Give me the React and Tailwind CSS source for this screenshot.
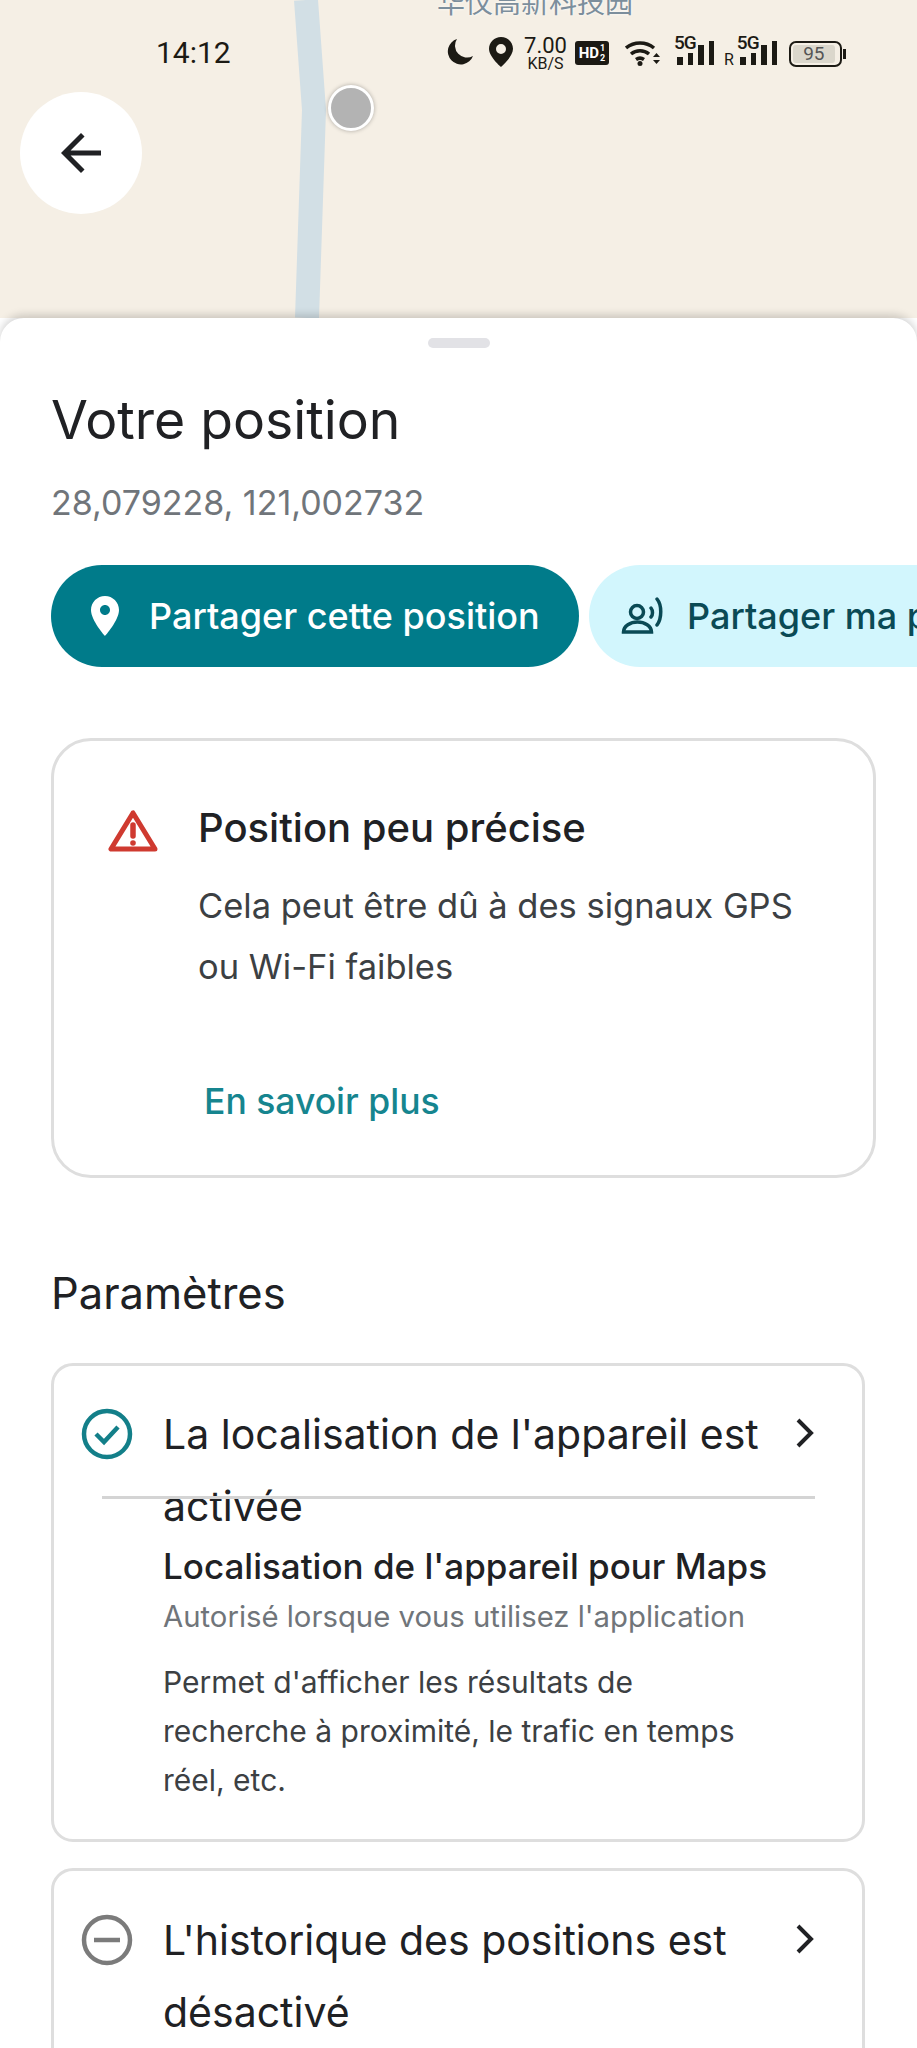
import { Fragment } from "react";

function BackArrow() {
  return (
    <svg viewBox="0 0 24 24" className="w-[60px] h-[60px] fill-[#202124]">
      <path d="M20 11H7.83l5.59-5.59L12 4l-8 8 8 8 1.41-1.41L7.83 13H20v-2z" />
    </svg>
  );
}

function Pin({ className }) {
  return (
    <svg viewBox="0 0 24 24" className={className}>
      <path d="M12 2C8.13 2 5 5.13 5 9c0 5.25 7 13 7 13s7-7.75 7-13c0-3.87-3.13-7-7-7zm0 9.5c-1.38 0-2.5-1.12-2.5-2.5s1.12-2.5 2.5-2.5 2.5 1.12 2.5 2.5-1.12 2.5-2.5 2.5z" />
    </svg>
  );
}

function SignalBars({ r }) {
  return (
    <div className="flex items-end h-[30px]">
      {r && <span className="text-[16px] leading-[14px] mr-[3px] font-['Roboto',sans-serif]">R</span>}
      <div className="relative w-[39px] h-[30px]">
        <span className="absolute left-0 top-[-3px] text-[19px] leading-[18px] font-medium tracking-[-1px] font-['Roboto',sans-serif]">5G</span>
        <div className="absolute bottom-[2px] left-[3px] flex items-end gap-[5px]">
          <i className="block w-[6px] h-[8px] bg-[#1c1a14]" />
          <i className="block w-[5px] h-[12px] bg-[#1c1a14]" />
          <i className="block w-[6px] h-[20px] bg-[#1c1a14]" />
          <i className="block w-[5px] h-[24px] bg-[#1c1a14]" />
        </div>
      </div>
    </div>
  );
}

function StatusBar() {
  return (
    <div className="absolute left-0 top-[36px] w-full h-[32px] text-[#1c1a14]">
      <span className="absolute left-[156px] top-[-1px] text-[30px] leading-[36px] font-['Roboto',sans-serif]">14:12</span>
      <div className="absolute left-[447px] top-0 h-[32px] flex items-center">
        <svg viewBox="0 0 26 26" className="w-[26px] h-[26px] fill-[#1c1a14]">
          <path d="M10 0a13 13 0 1 0 16 17A12 12 0 0 1 10 0z" />
        </svg>
        <svg viewBox="0 0 24 30" className="w-[24px] h-[30px] ml-[16px] fill-[#1c1a14]">
          <path fillRule="evenodd" d="M12 0C5.400 0 0 5.200 0 11.800 0 20 12 30 12 30s12-10 12-18.200C24 5.200 18.600 0 12 0zm0 7a5 5 0 1 1 0 10 5 5 0 0 1 0-10z" />
        </svg>
        <div className="flex flex-col items-center w-[41px] ml-[12px] font-['Roboto',sans-serif] mt-[3px]">
          <span className="text-[22px] leading-[20px]">7.00</span>
          <span className="text-[16px] leading-[15px]">KB/S</span>
        </div>
        <div className="flex items-center justify-center w-[34px] h-[24px] ml-[9px] mt-[2px] bg-[#1c1a14] rounded-[3px] text-white font-bold font-['Roboto',sans-serif]">
          <span className="text-[15px] leading-[24px]">HD</span>
          <span className="flex flex-col text-[9px] leading-[10px] ml-[1px]">
            <span>1</span>
            <span>2</span>
          </span>
        </div>
        <svg viewBox="0 0 35 28" className="w-[35px] h-[28px] ml-[16px]">
          <path d="M1 10a22 22 0 0 1 28 0M6 16a14 14 0 0 1 18 0M11 21.500a7 7 0 0 1 8 0" fill="none" stroke="#1c1a14" strokeWidth="3.500" />
          <circle cx="15" cy="25.500" r="2.500" fill="#1c1a14" />
          <path d="M28 19l3.500-4 3.500 4zM28 22l3.500 4 3.500-4z" fill="#1c1a14" />
        </svg>
        <div className="ml-[14px]"><SignalBars /></div>
        <div className="ml-[11px]"><SignalBars r /></div>
        <div className="flex items-center ml-[13px] mt-[4px]">
          <div className="w-[53px] h-[26px] p-[2px] border-2 border-[#1c1a14] rounded-[7px]">
            <div className="w-[42px] h-full bg-[#dbd7cc] rounded-[3px] text-[19px] leading-[18px] text-center text-[#555] font-['Roboto',sans-serif]">95</div>
          </div>
          <i className="block w-[3px] h-[10px] bg-[#1c1a14] ml-[1px]" />
        </div>
      </div>
    </div>
  );
}

function MapArea() {
  return (
    <div className="relative h-[318px] bg-[#f5efe5] overflow-hidden">
      <svg viewBox="0 0 917 318" className="absolute inset-0 w-full h-full">
        <path d="M306 0L314 110L307 318" fill="none" stroke="#d2dfe5" strokeWidth="24" />
      </svg>
      <span className="absolute left-[437px] top-[-15px] text-[28px] leading-[32px] text-[#7c8e9c] [text-shadow:0_0_3px_#ffffff] font-['Noto_Sans_CJK_SC',sans-serif]">华仪高新科技园</span>
      <div className="absolute left-[328px] top-[85px] w-[46px] h-[46px] rounded-full bg-[#b3b3b3] border-[3px] border-white shadow-[0_0_4px_rgba(0,0,0,0.3)]" />
      <StatusBar />
      <div className="absolute left-[20px] top-[92px] w-[122px] h-[122px] rounded-full bg-white flex items-center justify-center">
        <BackArrow />
      </div>
    </div>
  );
}

function StatusIcon({ active }) {
  if (active) {
    return (
      <svg viewBox="0 0 52 52" className="w-[52px] h-[52px] shrink-0" fill="none">
        <circle cx="26" cy="26" r="23" stroke="#137f89" strokeWidth="4.500" />
        <path d="M15 26l8 8 14-15" stroke="#137f89" strokeWidth="4.500" />
      </svg>
    );
  }
  return (
    <svg viewBox="0 0 52 52" className="w-[52px] h-[52px] shrink-0" fill="none">
      <circle cx="26" cy="26" r="23" stroke="#7b7b7b" strokeWidth="4.500" />
      <path d="M13 26h26" stroke="#7b7b7b" strokeWidth="4.500" />
    </svg>
  );
}

function SettingTitle({ active, lines }) {
  return (
    <div className="flex items-start">
      <div className="w-[109px] pl-[27px] pt-[10px] shrink-0">
        <StatusIcon active={active} />
      </div>
      <div className="w-[631px] text-[41px] leading-[72px] text-[#202124] whitespace-nowrap">
        {lines.map((l) => (
          <Fragment key={l}>{l}<br /></Fragment>
        ))}
      </div>
      <svg viewBox="0 0 22 32" className="w-[22px] h-[32px] mt-[19px] fill-none stroke-[#202124] stroke-[4]">
        <path d="M4 3l13 13L4 29" />
      </svg>
    </div>
  );
}

export default function App() {
  return (
    <div className="h-[2048px] overflow-hidden bg-white font-['Inter',sans-serif]">
      <MapArea />
      <div className="relative rounded-t-[24px] bg-white shadow-[0_-3px_8px_rgba(0,0,0,0.18)] pt-[20px]">
        <div className="w-[62px] h-[10px] mx-auto rounded-full bg-[#e2e2e6]" />

        <h1 className="ml-[51px] mt-[37px] text-[53.5px] leading-[70px] text-[#202124] font-normal">Votre position</h1>
        <p className="ml-[51px] mt-[25px] text-[34px] leading-[46px] text-[#70757a]">28,079228, 121,002732</p>

        <div className="flex gap-[10px] ml-[51px] mt-[39px] overflow-hidden">
          <div className="flex items-center shrink-0 w-[528px] h-[102px] rounded-full bg-[#007b8a] text-white pl-[30px]">
            <Pin className="w-[48px] h-[48px] fill-white" />
            <span className="ml-[20px] text-[36px] font-medium whitespace-nowrap">Partager cette position</span>
          </div>
          <div className="flex items-center shrink-0 w-[420px] h-[102px] rounded-l-full bg-[#d2f6fd] text-[#0a4a55] pl-[32px]">
            <svg viewBox="0 0 44 38" className="w-[44px] h-[38px] shrink-0 fill-none stroke-[#0a4a55] stroke-[3.5]">
              <circle cx="16" cy="15" r="6.500" />
              <path d="M2.500 35c0-6 7-10 14-10s14 4 14 10z" />
              <path d="M30 11c2 2.500 2 7 0 9M36 2c5 6 5 19 0 26" strokeLinecap="round" />
            </svg>
            <span className="ml-[22px] text-[36px] font-medium whitespace-nowrap">Partager ma position</span>
          </div>
        </div>

        {/* warning card */}
        <div className="ml-[51px] mr-[41px] mt-[71px] h-[440px] rounded-[40px] border-[3px] border-[#dedede] pt-[59px]">
          <div className="flex items-start">
            <svg viewBox="0 0 50 42" className="w-[50px] h-[42px] ml-[54px] mt-[10px] shrink-0" fill="none">
              <path d="M25 3L3 39h44z" stroke="#cf3a30" strokeWidth="5" strokeLinejoin="round" />
              <path d="M25 15v11" stroke="#cf3a30" strokeWidth="5.500" strokeLinecap="round" />
              <circle cx="25" cy="33" r="2.800" fill="#cf3a30" />
            </svg>
            <div className="ml-[40px]">
              <h2 className="text-[40px] leading-[56px] text-[#202124] font-medium">Position peu précise</h2>
              <p className="mt-[19px] text-[34.5px] leading-[61px] text-[#3c4043] whitespace-nowrap">Cela peut être dû à des signaux GPS<br />ou Wi-Fi faibles</p>
              <p className="mt-[80px] ml-[6px] text-[35.5px] leading-[50px] font-medium text-[#16858f]">En savoir plus</p>
            </div>
          </div>
        </div>

        <h2 className="ml-[51px] mt-[87px] text-[43.5px] leading-[56px] text-[#202124] font-normal">Paramètres</h2>

        {/* settings */}
        <div className="relative ml-[51px] w-[814px] h-[479px] mt-[42px] rounded-[22px] border-[3px] border-[#dedede] pt-[32px]">
          <SettingTitle active lines={["La localisation de l'appareil est", "activée"]} />
          <div className="absolute left-[48px] top-[130px] w-[713px] h-[3px] bg-[#d4d4d4]" />
          <div className="ml-[109px]">
            <p className="mt-[1px] text-[35px] leading-[46px] font-medium text-[#202124] whitespace-nowrap">Localisation de l'appareil pour Maps</p>
            <p className="mt-[6px] text-[29.3px] leading-[44px] text-[#70757a] whitespace-nowrap">Autorisé lorsque vous utilisez l'application</p>
            <p className="mt-[19px] text-[30px] leading-[49px] text-[#3c4043] whitespace-nowrap">Permet d'afficher les résultats de<br />recherche à proximité, le trafic en temps<br />réel, etc.</p>
          </div>
        </div>
        <div className="ml-[51px] w-[814px] h-[300px] mt-[26px] rounded-[22px] border-[3px] border-[#dedede] pt-[33px]">
          <SettingTitle lines={["L'historique des positions est", "désactivé"]} />
        </div>
      </div>
    </div>
  );
}
